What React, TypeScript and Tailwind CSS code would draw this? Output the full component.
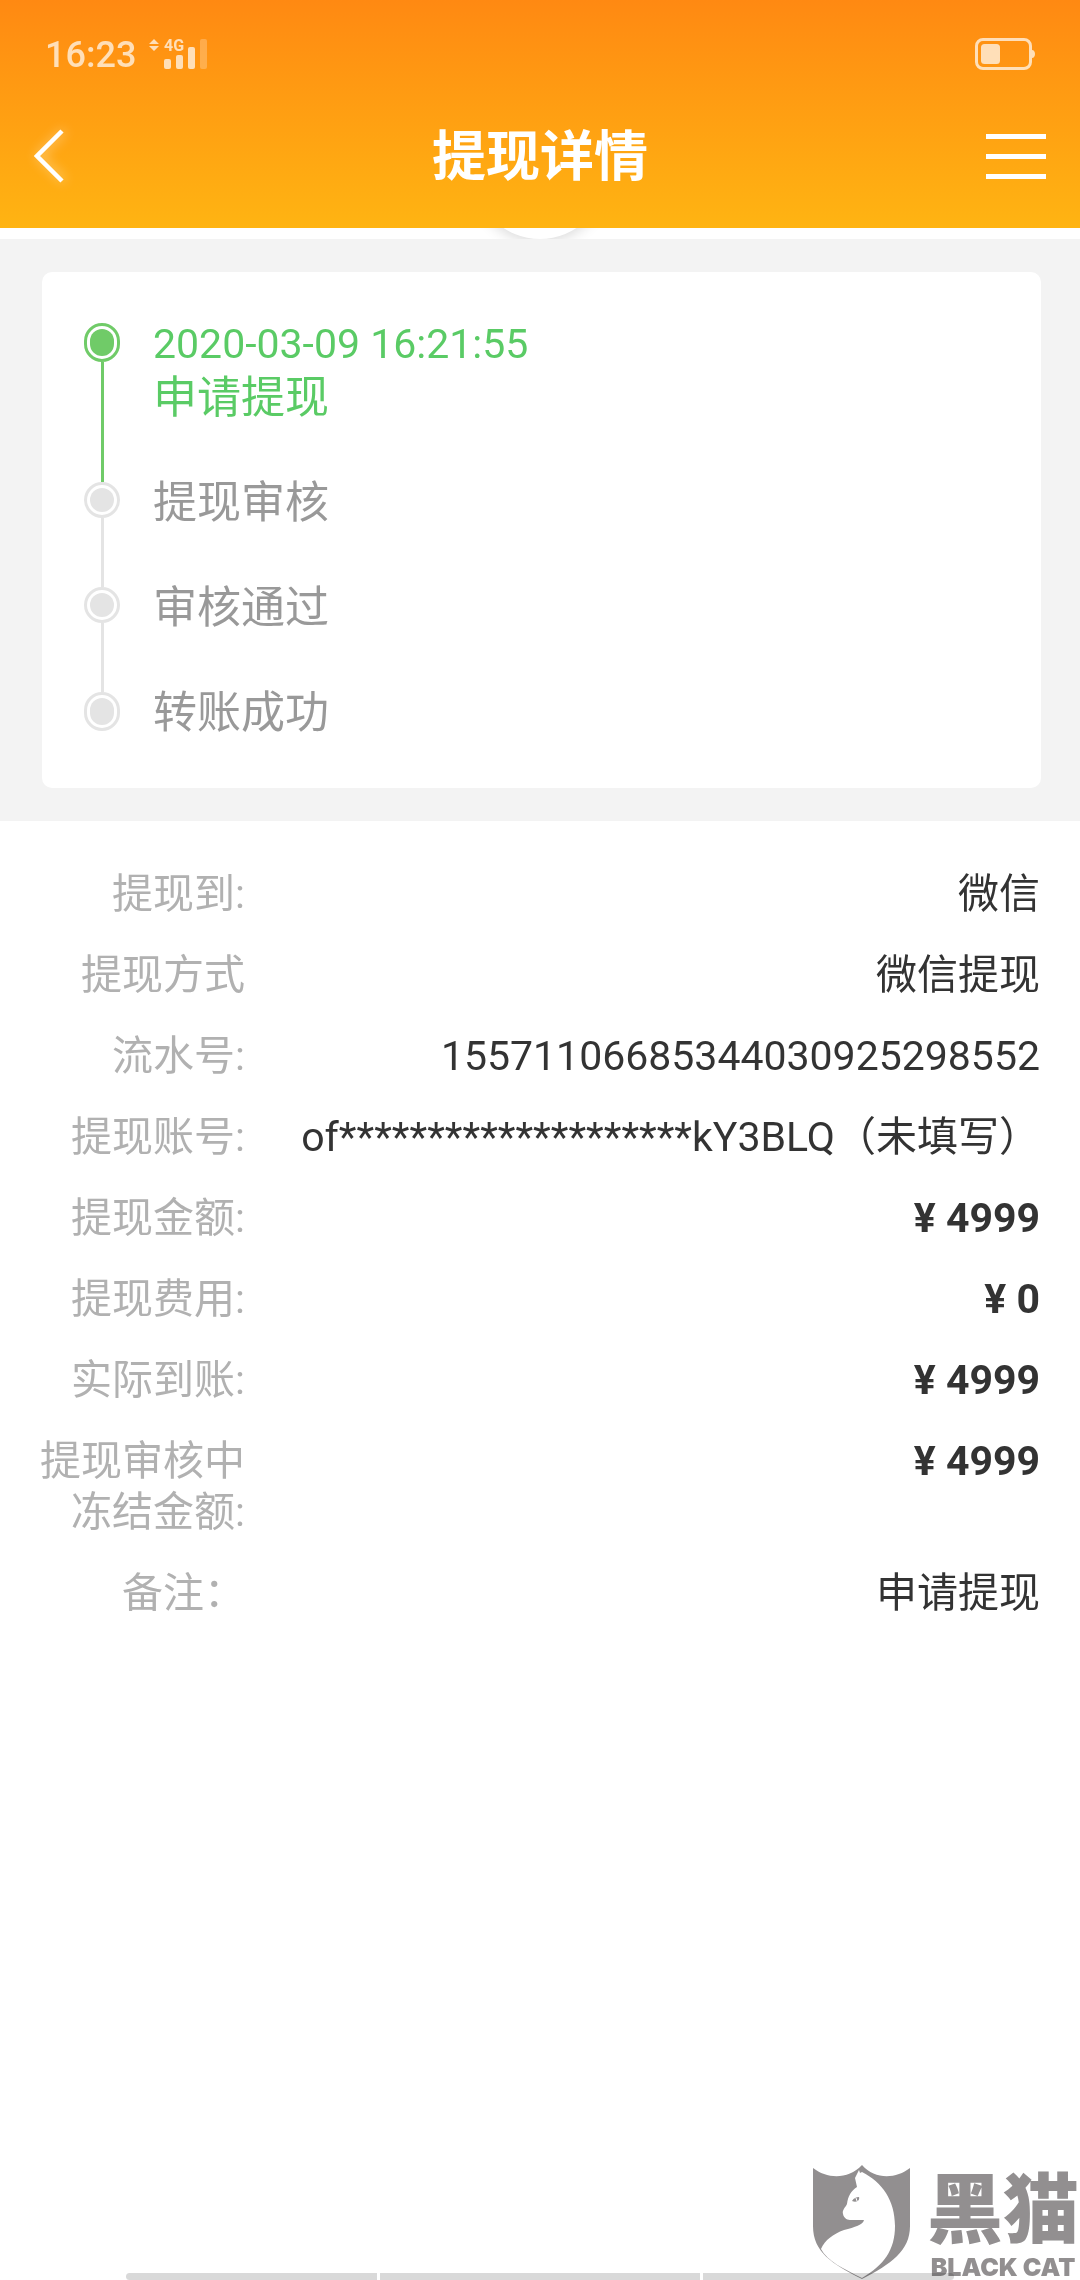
const steps = [
  { time: '2020-03-09 16:21:55', label: '申请提现', done: true },
  { label: '提现审核', done: false },
  { label: '审核通过', done: false },
  { label: '转账成功', done: false },
];

const details = [
  { label: ['提现到:'], value: '微信', bold: false },
  { label: ['提现方式'], value: '微信提现', bold: false },
  { label: ['流水号:'], value: '15571106685344030925298552', bold: false },
  { label: ['提现账号:'], value: 'of********************kY3BLQ（未填写）', bold: false },
  { label: ['提现金额:'], value: '¥ 4999', bold: true },
  { label: ['提现费用:'], value: '¥ 0', bold: true },
  { label: ['实际到账:'], value: '¥ 4999', bold: true },
  { label: ['提现审核中', '冻结金额:'], value: '¥ 4999', bold: true },
  { label: ['备注：'], value: '申请提现', bold: false },
];

function StatusBar() {
  return (
    <div className="flex h-[108px] items-center justify-between pl-[45px] pr-[45px] text-white/70">
      <div className="flex items-center gap-[13px]">
        <span className="pt-[2px] text-[36px] leading-[40px] font-medium">16:23</span>
        <svg className="h-[40px] w-[60px]" viewBox="0 -4 60 40" fill="currentColor">
          <path d="M0 6 5 1l5 5zM0 8h10l-5 5z" />
          <text x="15" y="13" className="text-[16px] font-bold">
            4G
          </text>
          <rect x="15" y="21" width="7" height="10" rx="2" />
          <rect x="27" y="17" width="7" height="14" rx="2" />
          <rect x="39" y="9" width="7" height="22" rx="2" />
          <rect x="51" y="1" width="7" height="30" rx="2" opacity="0.35" />
        </svg>
      </div>
      <svg className="h-[32px] w-[60px]" viewBox="0 0 60 32" fill="none">
        <rect x="1.5" y="1.5" width="54" height="29" rx="6.5" stroke="currentColor" strokeWidth="3" />
        <rect x="6" y="6" width="19" height="20" rx="3.5" fill="currentColor" />
        <path d="M57 12c2 0 3 2 3 4s-1 4-3 4z" fill="currentColor" />
      </svg>
    </div>
  );
}

function Header() {
  return (
    <header className="bg-linear-to-b from-[#ff8912] to-[#ffb412] pb-6 text-white">
      <StatusBar />
      <div className="flex h-24 items-center justify-between pl-[34px] pr-[34px]">
        <button type="button" aria-label="返回" className="w-[60px]">
          <svg
            className="h-[54px] w-[30px] drop-shadow-[2px_0_6px_rgba(255,255,255,0.5)]"
            viewBox="0 0 30 54"
            fill="none"
            stroke="currentColor"
            strokeWidth="4.5"
          >
            <path d="M28 2 3 27l25 25" />
          </svg>
        </button>
        <h1 className="pt-1 text-[54px] leading-[72px] font-bold">提现详情</h1>
        <button type="button" aria-label="菜单" className="flex w-[60px] flex-col gap-[15px]">
          <span className="h-[5px] w-full bg-white" />
          <span className="h-[5px] w-full bg-white" />
          <span className="h-[5px] w-full bg-white" />
        </button>
      </div>
    </header>
  );
}

// Bottom edge of the pull-to-refresh spinner showing under the header
function RefreshEdge() {
  return (
    <div className="relative h-[11px] overflow-hidden bg-white">
      <div className="absolute bottom-0 left-1/2 size-[132px] -translate-x-1/2 rounded-full bg-white shadow-[0_3px_14px_rgba(0,0,0,0.15)]" />
    </div>
  );
}

function Timeline() {
  const last = steps.length - 1;

  return (
    <section className="bg-[#f3f3f3] py-[33px] pr-[39px] pl-[42px]">
      <ol className="rounded-[10px] bg-white px-[42px] pt-[42px] pb-[48px]">
        {steps.map((step, index) => (
          <li
            key={step.label}
            className={`flex gap-[33px] ${step.done ? 'text-[#5acb65]' : 'text-[#999]'}`}
          >
            <div className="flex w-9 flex-col items-center">
              <span
                className={`h-[9px] w-[3px] ${index > 1 ? 'bg-[#e4e4e4]' : index === 1 ? 'bg-[#70cb68]' : ''}`}
              />
              <span
                className={`flex w-9 shrink-0 rounded-full border-3 p-[3px] ${
                  index === 0 || index === last ? 'h-[39px]' : 'h-9'
                } ${step.done ? 'border-[#70cb68]' : 'border-[#e4e4e4]'}`}
              >
                <span className={`flex-1 rounded-full ${step.done ? 'bg-[#70cb68]' : 'bg-[#e4e4e4]'}`} />
              </span>
              {index < last && (
                <span className={`w-[3px] flex-1 ${step.done ? 'bg-[#70cb68]' : 'bg-[#e4e4e4]'}`} />
              )}
            </div>
            <div className={`pt-[3px] ${index < last ? 'pb-[48px]' : ''}`}>
              {step.time && <time className="block text-[41px] leading-[54px]">{step.time}</time>}
              <p className="text-[44px] leading-[54px]">{step.label}</p>
            </div>
          </li>
        ))}
      </ol>
    </section>
  );
}

function Details() {
  return (
    <dl className="flex flex-1 flex-col gap-[30px] pt-[48px] pr-[40px] pl-[40px] text-[41px] leading-[51px]">
      {details.map((row) => (
        <div key={row.label[0]} className="flex justify-between">
          <dt className="w-[205px] shrink-0 text-right text-[#b1b1b1]">
            {row.label.map((line) => (
              <span key={line} className="block whitespace-nowrap">
                {line}
              </span>
            ))}
          </dt>
          <dd className={`text-right text-[#333] ${row.bold ? 'font-bold' : ''}`}>{row.value}</dd>
        </div>
      ))}
    </dl>
  );
}

function GestureBar() {
  return (
    <div className="flex h-[7px] gap-[3px] px-[126px]">
      <span className="flex-1 rounded-l-full bg-[#d9d9d9]" />
      <span className="flex-[1.28] bg-[#d9d9d9]" />
      <span className="flex-1 rounded-r-full bg-[#d9d9d9]" />
    </div>
  );
}

function Watermark() {
  return (
    <div className="absolute right-px bottom-0 flex items-end gap-[17px] text-[#928f90] mix-blend-multiply">
      <svg className="h-[116px] w-[98px]" viewBox="0 0 98 116" fill="currentColor" fillRule="evenodd">
        <path d="M1 4c14 11 35 12 49-3 13 15 34 14 48 3v58c0 25-19 38-48 53C20 100 1 88 1 62zM43 14l2 9c-6 4-9 9-10 17-2 4-5 6-4 10 1 5 5 6 8 6h13c-1 5-9 7-20 10-11 4-19 10-23 19 6 12 23 20 41 29 22-13 33-28 33-52 0-26-13-44-33-54l-2 1-1-3z" />
        <path d="M40 37c2-3 4-4 7-4 1 3-2 6-7 4z" />
        <path d="m44 34 1 3" stroke="#fff" />
      </svg>
      <div className="flex flex-col items-center gap-[12px]">
        <span className="font-['Noto_Sans_CJK_SC',sans-serif] text-[76px] leading-[76px] font-black">黑猫</span>
        <span className="font-[Inter,sans-serif] text-[25px] leading-[26px] font-black">BLACK CAT</span>
      </div>
    </div>
  );
}

export default function App() {
  return (
    <main className="relative flex min-h-screen flex-col bg-white font-[Roboto,'Noto_Sans_CJK_SC',sans-serif]">
      <Header />
      <RefreshEdge />
      <Timeline />
      <Details />
      <GestureBar />
      <Watermark />
    </main>
  );
}
